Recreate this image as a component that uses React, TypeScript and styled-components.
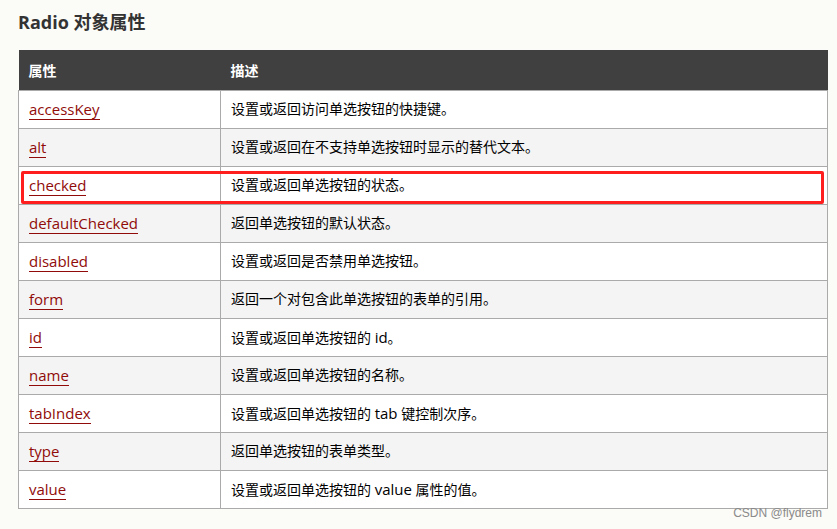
import React from "react";
import styled, { createGlobalStyle } from "styled-components";

const Global = createGlobalStyle`
  html, body { margin: 0; padding: 0; background: #fbfbf7; }
  body { font-family: "Open Sans", "Noto Sans CJK SC", sans-serif; color: #000; }
`;

const Page = styled.div`
  width: 837px;
  height: 529px;
  padding: 10px 9px 0 18px;
  box-sizing: border-box;
  position: relative;
`;

const Title = styled.h2`
  margin: 0 0 15px 0;
  font-family: "Open Sans", "Noto Sans CJK SC", sans-serif;
  font-size: 18px;
  font-weight: 700;
  line-height: 25px;
  color: #333;
`;

const TableWrap = styled.div`
  position: relative;
  width: 810px;
`;

const Table = styled.table`
  width: 810px;
  border-collapse: collapse;
  table-layout: fixed;
  font-size: 14px;
`;

const HeadCell = styled.th<{ $w?: number }>`
  background: #404040;
  color: #fff;
  font-weight: 700;
  text-align: left;
  height: 40px;
  padding: 0 10px;
  box-sizing: border-box;
  border: none;
  font-size: 14px;
  ${(p) => (p.$w ? `width: ${p.$w}px;` : "")}
`;

const Row = styled.tr<{ $alt: boolean }>`
  background: ${(p) => (p.$alt ? "#f4f4f4" : "#ffffff")};
`;

const Cell = styled.td`
  border: 1px solid #aaaaaa;
  height: 38px;
  padding: 0 10px;
  box-sizing: border-box;
  vertical-align: middle;
  font-size: 14px;
  line-height: 20px;
`;

const PropLink = styled.a`
  color: #900b09;
  font-size: 15px;
  text-decoration: none;
  border-bottom: 1px solid #900b09;
`;

const Latin = styled.span`
  font-size: 15px;
`;

const Highlight = styled.div`
  position: absolute;
  left: 3px;
  top: 121px;
  width: 803px;
  height: 33px;
  border: 3px solid #ff1e1e;
  border-radius: 2px;
  box-sizing: border-box;
  pointer-events: none;
`;

const Watermark = styled.div`
  position: absolute;
  right: 15px;
  bottom: 9px;
  font-family: "Liberation Sans", Arial, sans-serif;
  font-size: 12px;
  color: #8a8a8a;
`;

type Desc = (string | { latin: string })[];

const rows: [string, Desc][] = [
  ["accessKey", ["设置或返回访问单选按钮的快捷键。"]],
  ["alt", ["设置或返回在不支持单选按钮时显示的替代文本。"]],
  ["checked", ["设置或返回单选按钮的状态。"]],
  ["defaultChecked", ["返回单选按钮的默认状态。"]],
  ["disabled", ["设置或返回是否禁用单选按钮。"]],
  ["form", ["返回一个对包含此单选按钮的表单的引用。"]],
  ["id", ["设置或返回单选按钮的 ", { latin: "id" }, "。"]],
  ["name", ["设置或返回单选按钮的名称。"]],
  ["tabIndex", ["设置或返回单选按钮的 ", { latin: "tab" }, " 键控制次序。"]],
  ["type", ["返回单选按钮的表单类型。"]],
  ["value", ["设置或返回单选按钮的 ", { latin: "value" }, " 属性的值。"]],
];

export default function App() {
  return (
    <Page>
      <Global />
      <Title>Radio 对象属性</Title>
      <TableWrap>
        <Table>
          <thead>
            <tr>
              <HeadCell $w={202}>属性</HeadCell>
              <HeadCell>描述</HeadCell>
            </tr>
          </thead>
          <tbody>
            {rows.map(([name, desc], i) => (
              <Row key={name} $alt={i % 2 === 1}>
                <Cell>
                  <PropLink href="#">{name}</PropLink>
                </Cell>
                <Cell>
                  {desc.map((part, j) =>
                    typeof part === "string" ? (
                      <React.Fragment key={j}>{part}</React.Fragment>
                    ) : (
                      <Latin key={j}>{part.latin}</Latin>
                    )
                  )}
                </Cell>
              </Row>
            ))}
          </tbody>
        </Table>
        <Highlight />
      </TableWrap>
      <Watermark>CSDN @flydrem</Watermark>
    </Page>
  );
}
